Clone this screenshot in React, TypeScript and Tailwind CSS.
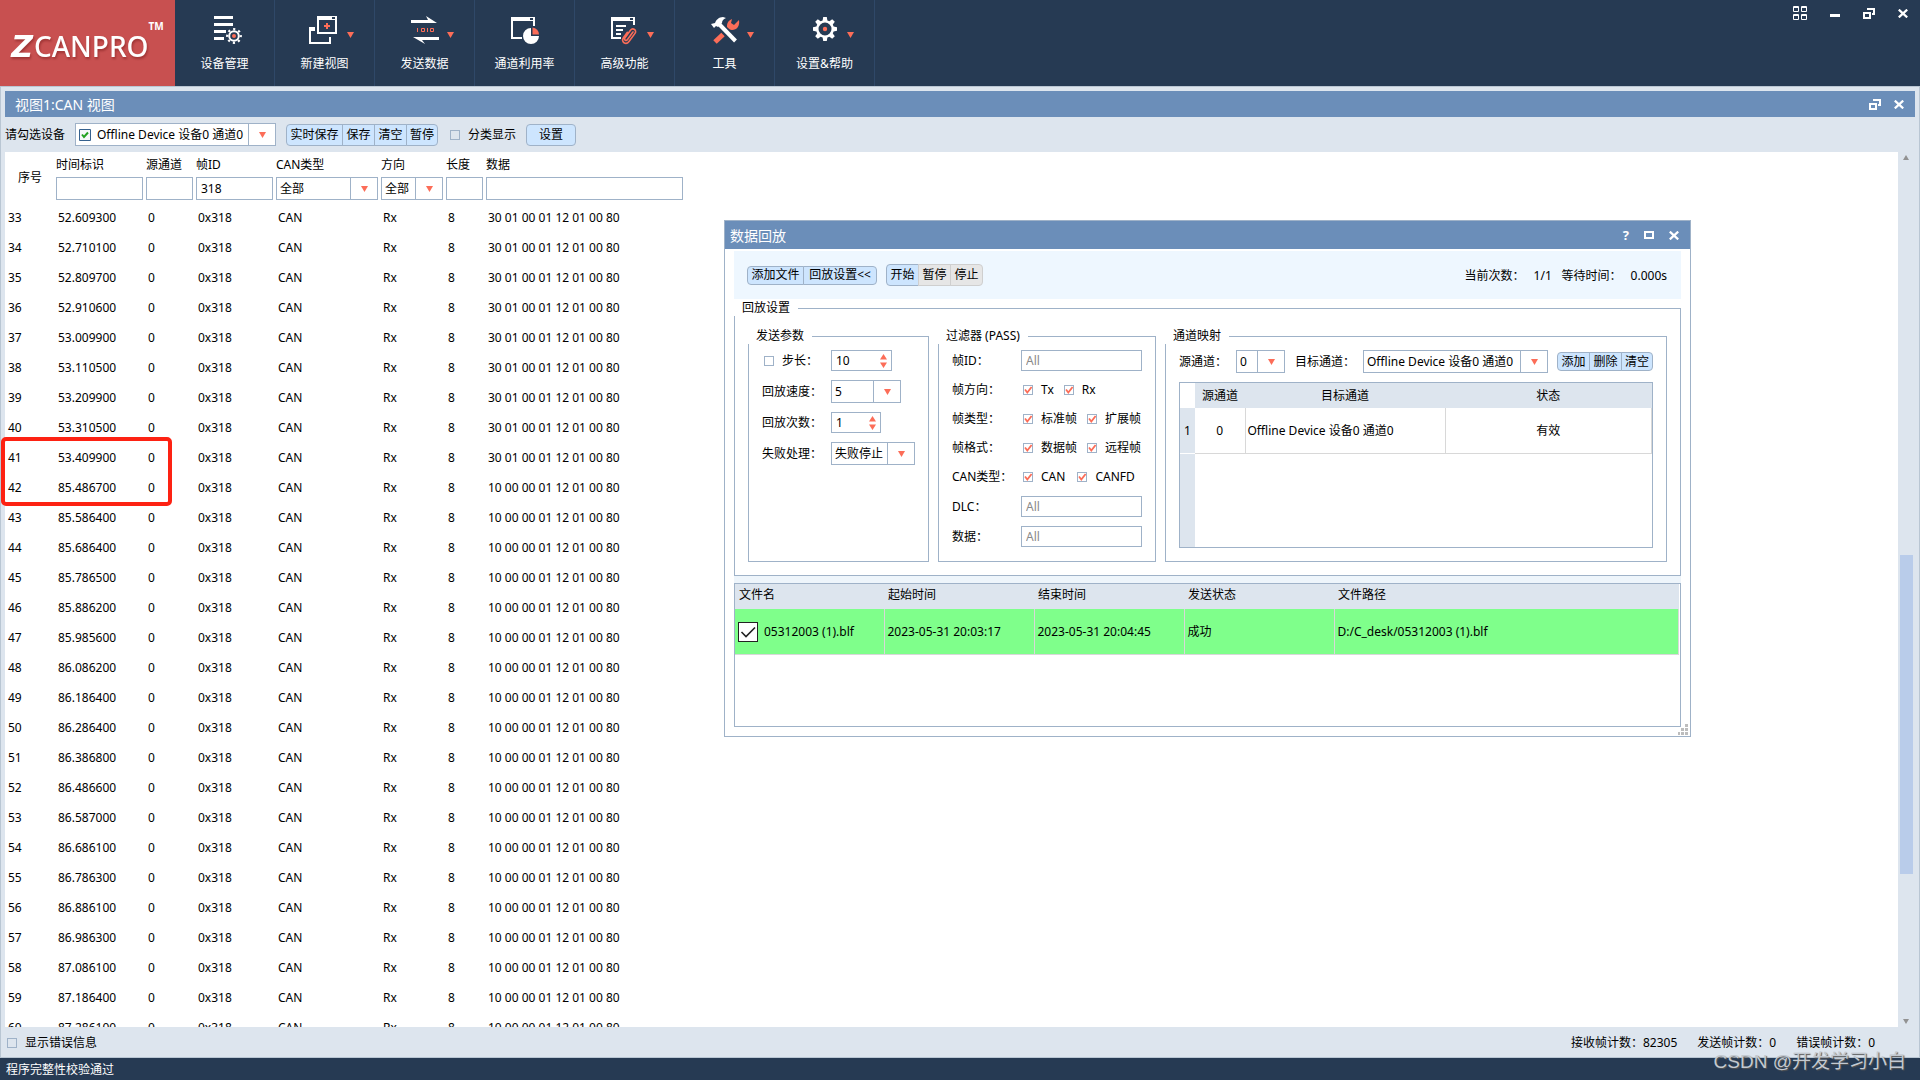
import React from "react";

const FONT = "font-['Noto_Sans','Noto_Sans_CJK_SC',sans-serif]";

const frames: [number, string][] = [
  [33, "52.609300"], [34, "52.710100"], [35, "52.809700"], [36, "52.910600"],
  [37, "53.009900"], [38, "53.110500"], [39, "53.209900"], [40, "53.310500"],
  [41, "53.409900"], [42, "85.486700"], [43, "85.586400"], [44, "85.686400"],
  [45, "85.786500"], [46, "85.886200"], [47, "85.985600"], [48, "86.086200"],
  [49, "86.186400"], [50, "86.286400"], [51, "86.386800"], [52, "86.486600"],
  [53, "86.587000"], [54, "86.686100"], [55, "86.786300"], [56, "86.886100"],
  [57, "86.986300"], [58, "87.086100"], [59, "87.186400"], [60, "87.286100"],
];

function Arrow({ className = "" }: { className?: string }) {
  return (
    <svg viewBox="0 0 7 6" className={`h-1.5 w-[7px] fill-[#fc6d58] ${className}`} aria-hidden="true">
      <path d="M0 0h7L3.5 6z" />
    </svg>
  );
}

function Select({ label, value, className, arrowClass, lead }: {
  label: string; value: string; className: string; arrowClass: string; lead?: React.ReactNode;
}) {
  return (
    <div className={`relative flex h-[23px] items-center border border-[#9fb2c8] bg-white ${className}`}>
      {lead}
      <select aria-label={label} className="h-full w-full appearance-none overflow-hidden bg-transparent pl-[3px] text-xs whitespace-nowrap outline-none">
        <option>{value}</option>
      </select>
      <span className={`pointer-events-none absolute inset-y-0 right-0 flex items-center justify-center border-l border-[#9fb2c8] bg-white ${arrowClass}`}>
        <Arrow />
      </span>
    </div>
  );
}

function Check({ label, checked, className = "" }: { label: string; checked?: boolean; className?: string }) {
  return (
    <label className={`flex items-center gap-2 whitespace-nowrap ${className}`}>
      <span className="grid size-[10px] shrink-0">
        <input type="checkbox" defaultChecked={checked} className="peer size-[10px] appearance-none border border-[#9fb2c8] [grid-area:1/1]" />
        <svg viewBox="0 0 10 10" className="pointer-events-none hidden size-[10px] [grid-area:1/1] peer-checked:block" fill="none" stroke="#fc6d58" strokeWidth="1.8" aria-hidden="true">
          <path d="M2 4.5 4.3 7.5 8.6 2" />
        </svg>
      </span>
      {label}
    </label>
  );
}

function ButtonGroup({ items, className }: { items: { text: string; width: string; disabled?: boolean }[]; className: string }) {
  return (
    <div className={`flex ${className}`}>
      {items.map((b) => (
        <button
          key={b.text}
          disabled={b.disabled}
          className={`-mr-px flex h-full items-center justify-center border border-[#9fb2c8] bg-[#cde5fe] whitespace-nowrap first:rounded-l last:mr-0 last:rounded-r disabled:border-[#cfcfcf] disabled:bg-[#e6e6e6] ${b.width}`}
        >
          {b.text}
        </button>
      ))}
    </div>
  );
}

function Group({ title, className = "", bodyClass, children }: {
  title: string; className?: string; bodyClass: string; children: React.ReactNode;
}) {
  return (
    <fieldset className={`min-w-0 border border-[#9fb2c8] p-0 ${className}`}>
      <legend className="-ml-px h-4 bg-white px-2 leading-4">{title}</legend>
      <div className={bodyClass}>{children}</div>
    </fieldset>
  );
}

function Spin({ label, value, className }: { label: string; value: string; className: string }) {
  return (
    <div className={`flex h-[21px] items-center border border-[#9fb2c8] bg-white ${className}`}>
      <input aria-label={label} defaultValue={value} className="h-full w-full min-w-0 pl-1 outline-none" />
      <svg viewBox="0 0 7 14" className="mr-1 h-3.5 w-[7px] shrink-0 fill-[#fc6d58]" aria-hidden="true">
        <path d="M3.5 0 7 5.5H0zM0 8.5h7L3.5 14z" />
      </svg>
    </div>
  );
}

function CloseIcon() {
  return (
    <svg viewBox="0 0 10 9" className="h-[9px] w-2.5" stroke="#fff" strokeWidth="2.2" aria-hidden="true">
      <path d="M.8.6 9.2 8.4M9.2.6.8 8.4" />
    </svg>
  );
}

function RestoreIcon() {
  return (
    <svg viewBox="0 0 12 11" className="h-[11px] w-3" fill="none" stroke="#fff" strokeWidth="2" aria-hidden="true">
      <path d="M1 5h6v5H1zM4 1h7v5H9M5 2V0" />
    </svg>
  );
}

const GEAR =
  "M12.2 1h3.6l.6 3.4 2 .8 2.8-2 2.6 2.6-2 2.8.8 2 3.4.6v3.6l-3.4.6-.8 2 2 2.8-2.6 2.6-2.8-2-2 .8-.6 3.4h-3.6l-.6-3.4-2-.8-2.8 2-2.6-2.6 2-2.8-.8-2L2 14.8v-3.6l3.4-.6.8-2-2-2.8 2.6-2.6 2.8 2 2-.8z";

const tools: { label: string; arrow: boolean; icon: React.ReactNode }[] = [
  {
    label: "设备管理", arrow: false,
    icon: (
      <g transform="translate(3 0)">
        <path fill="#fff" d="M0 0h19v3H0zM0 7h19v3H0zM0 14h12v3H0zM0 21h10v3H0z" />
        <g transform="translate(20 20)">
          <circle r="4.8" fill="none" stroke="#fff" strokeWidth="2" />
          <circle r="6.8" fill="none" stroke="#fff" strokeWidth="2.2" strokeDasharray="2.2 3.14" strokeDashoffset="1.1" />
          <circle r="2" fill="#fc6d58" />
        </g>
      </g>
    ),
  },
  {
    label: "新建视图", arrow: true,
    icon: (
      <g transform="translate(-2 0)">
        <path fill="#fff" fillRule="evenodd" d="M8 0h20v18H8zM10 4v12h16V4zM23 1v2h3V1z" />
        <path fill="#fff" d="M0 11h6v4H2v11h18v-5h2v7H0z" />
        <path fill="#fc6d58" d="M17 7h2v2h2v2h-2v2h-2v-2h-2V9h2z" />
      </g>
    ),
  },
  {
    label: "发送数据", arrow: true,
    icon: (
      <>
        <path fill="#fff" d="M0 4h17L15 0l11 7H0zM28 24H11l3 4L2 21h26z" />
        <path fill="none" stroke="#fc6d58" d="M6.500 12v4M10.500 12.500h3v3h-3zM16.500 12v4M19.500 12.500h3v3h-3z" />
      </>
    ),
  },
  {
    label: "通道利用率", arrow: false,
    icon: (
      <>
        <path fill="#fff" fillRule="evenodd" d="M0 1h24v9h-2V5H2v16h9v2H0zM19 2v2h3V2z" />
        <path fill="#fff" d="M20 12v8h8a8 8 0 1 1-8-8z" />
        <path fill="#fc6d58" d="M21.500 11.500a7 7 0 0 1 6.500 7h-6.500z" />
      </>
    ),
  },
  {
    label: "高级功能", arrow: true,
    icon: (
      <>
        <path fill="#fff" fillRule="evenodd" d="M0 1h24v8h-2V5H2v16h8v2H0zM19 2v2h3V2z" />
        <path fill="#fff" d="M5 9h10v2H5zM5 13h7v2H5zM5 17h5v2H5z" />
        <path fill="none" stroke="#fc6d58" strokeWidth="1.6" strokeLinecap="round" d="m22 16-5.500 7.500c-1.500 2-4 .3-2.500-1.800l5.500-7.500c2.300-3 6.800 0 4.500 3.200L18 25.500c-3 4-8.500.5-5.600-3.700l4-5.500" />
      </>
    ),
  },
  {
    label: "工具", arrow: true,
    icon: (
      <>
        <path stroke="#fc6d58" strokeWidth="5" d="m4 26 8-7.500" />
        <path fill="#fc6d58" d="M16 11c0-4 1-6 5-8l-1 4 3 2 5-5c1 6-2 10-7 10-2 0-3-1-5-3z" />
        <path stroke="#fff" strokeWidth="4" d="m8 8 16.500 17" />
        <path fill="#fff" d="m0 8 4-1c1-3 4-6 8-6l3 1c-3 1-4 3-4 5l-4 4-2-1-2 2z" />
      </>
    ),
  },
  {
    label: "设置&帮助", arrow: true,
    icon: (
      <>
        <path fill="#fff" fillRule="evenodd" d={`${GEAR}M14 6.500a6.500 6.500 0 1 0 0 13 6.500 6.500 0 0 0 0-13z`} />
        <circle cx="14" cy="13" r="2.200" fill="#fc6d58" />
      </>
    ),
  },
];

function Header() {
  return (
    <header className="flex h-[86px] shrink-0 bg-[#263a53] text-white">
      <div className="flex w-[175px] items-center justify-center bg-[#c85050] pt-1.5 leading-none">
        <div className="flex items-baseline gap-px whitespace-nowrap drop-shadow-[1px_2px_1px_rgba(80,0,0,0.35)]">
          <span className="font-['DejaVu_Sans'] text-[30px] leading-7 font-bold italic">Z</span>
          <span className="font-['Noto_Sans'] text-[28px] leading-7 font-medium">CANPRO</span>
        </div>
        <span className="mb-10 text-[10px] leading-3 font-bold">TM</span>
      </div>
      <nav className="flex">
        {tools.map((t) => (
          <button key={t.label} className="relative flex w-[100px] flex-col items-center border-r border-[#2f4868] pt-4 text-xs">
            <svg viewBox="0 0 28 28" className="size-7 overflow-visible" aria-hidden="true">{t.icon}</svg>
            <span className="mt-[11px] leading-[18px]">{t.label}</span>
            {t.arrow && <Arrow className="absolute top-8 left-[72px]" />}
          </button>
        ))}
      </nav>
      <div className="ml-auto flex h-[26px] items-center gap-[23px] pr-3">
        <button aria-label="布局">
          <svg viewBox="0 0 14 14" className="size-3.5" fill="none" stroke="#fff" aria-hidden="true">
            <path d="M.5.500h5v5h-5zM8.500.500h5v5h-5zM.5 8.500h5v5h-5zM8.500 8.500h5v5h-5zM0 1.500h6M8 1.500h6M0 9.500h6M8 9.500h6" />
          </svg>
        </button>
        <button aria-label="最小化" className="mt-1 h-[3px] w-2.5 bg-white" />
        <button aria-label="还原"><RestoreIcon /></button>
        <button aria-label="关闭"><CloseIcon /></button>
      </div>
    </header>
  );
}

const box = "h-[23px] w-full border border-[#9fb2c8] bg-white pl-[4px] outline-none";

function FrameTable() {
  const th = "pt-1 pr-0.5 pb-0.5 pl-px text-left align-top font-normal";
  const td = "pt-0.5 pl-[3px]";
  return (
    <table className="w-[680px] table-fixed border-collapse whitespace-nowrap">
      <colgroup>
        <col className="w-[50px]" /><col className="w-[90px]" /><col className="w-[50px]" /><col className="w-20" />
        <col className="w-[105px]" /><col className="w-[65px]" /><col className="w-10" /><col />
      </colgroup>
      <thead>
        <tr className="h-[50px]">
          <th className="pt-0.5 text-center font-normal">序号</th>
          <th className={th}><label className="block h-[21px] leading-[18px]" htmlFor="time">时间标识</label><input id="time" className={box} /></th>
          <th className={th}><label className="block h-[21px] leading-[18px]" htmlFor="src">源通道</label><input id="src" className={box} /></th>
          <th className={th}><label className="block h-[21px] leading-[18px]" htmlFor="fid">帧ID</label><input id="fid" defaultValue="318" className={box} /></th>
          <th className={th}><span className="block h-[21px] leading-[18px]">CAN类型</span><Select label="CAN类型" value="全部" className="w-full" arrowClass="w-[27px]" /></th>
          <th className={th}><span className="block h-[21px] leading-[18px]">方向</span><Select label="方向" value="全部" className="w-full" arrowClass="w-[27px]" /></th>
          <th className={th}><label className="block h-[21px] leading-[18px]" htmlFor="len">长度</label><input id="len" className={box} /></th>
          <th className={th}><label className="block h-[21px] leading-[18px]" htmlFor="data">数据</label><input id="data" className={box} /></th>
        </tr>
      </thead>
      <tbody>
        {frames.map(([n, t]) => (
          <tr key={n} className="h-[30px]">
            <td className={td}>{n}</td>
            <td className={td}>{t}</td>
            <td className={td}>0</td>
            <td className={td}>0x318</td>
            <td className={td}>CAN</td>
            <td className={td}>Rx</td>
            <td className={td}>8</td>
            <td className={td}>{n <= 41 ? "30 01 00 01 12 01 00 80" : "10 00 00 01 12 01 00 80"}</td>
          </tr>
        ))}
      </tbody>
    </table>
  );
}

function FilterRow({ label, className, children }: { label: string; className: string; children: React.ReactNode }) {
  return (
    <div className={`flex items-center ${className}`}>
      <span className="w-[69px] shrink-0 whitespace-nowrap">{label}</span>
      {children}
    </div>
  );
}

function ReplayDialog() {
  const all = "h-[21px] w-[121px] border border-[#9fb2c8] pl-1 outline-none placeholder:text-[#8a8a8a]";
  return (
    <section role="dialog" aria-label="数据回放" className="absolute top-[220px] left-[724px] w-[967px] border border-[#9fb2c8] bg-white">
      <div className="flex h-7 items-center bg-[#6b8eb9] pr-[11px] pl-[5px] text-sm text-white">
        <h2 className="pt-0.5">数据回放</h2>
        <div className="ml-auto flex items-center gap-[15px]">
          <button className="text-[13px] font-bold">?</button>
          <button aria-label="最大化" className="h-2 w-2.5 border-2 border-white" />
          <button aria-label="关闭"><CloseIcon /></button>
        </div>
      </div>
      <div className="mx-[9px] mt-0.5 flex h-12 items-center bg-[#eef7ff] pr-3.5 pl-[13px]">
        <ButtonGroup className="h-[19px]" items={[{ text: "添加文件", width: "w-[57px]" }, { text: "回放设置<<", width: "w-[74px]" }]} />
        <ButtonGroup className="ml-[9px] h-[22px]" items={[{ text: "开始", width: "w-[33px]" }, { text: "暂停", width: "w-[33px]", disabled: true }, { text: "停止", width: "w-[33px]", disabled: true }]} />
        <div className="ml-auto flex pt-0.5 whitespace-nowrap">
          <span className="w-[69px]">当前次数：</span>
          <span className="w-7">1/1</span>
          <span className="w-[69px]">等待时间：</span>
          <span>0.000s</span>
        </div>
      </div>
      <div className="mx-[9px] pt-px">
        <Group title="回放设置" bodyClass="px-[13px] pt-3 pb-[13px]">
          <div className="flex gap-[9px]">
            <Group title="发送参数" className="w-[181px]" bodyClass="pt-1.5 pl-[13px]">
              <div className="grid grid-cols-[69px_auto] items-center">
                <Check label="步长：" className="h-[21px] pl-0.5" />
                <Spin label="步长" value="10" className="w-[61px]" />
                <span className="mt-[9px]">回放速度：</span>
                <Select label="回放速度" value="5" className="mt-[9px] w-[70px]" arrowClass="w-[27px]" />
                <span className="mt-[9px]">回放次数：</span>
                <Spin label="回放次数" value="1" className="mt-[9px] w-[50px]" />
                <span className="mt-[9px]">失败处理：</span>
                <Select label="失败处理" value="失败停止" className="mt-[9px] w-[84px]" arrowClass="w-[27px]" />
              </div>
            </Group>
            <Group title="过滤器 (PASS)" className="w-[218px]" bodyClass="pt-1.5 pl-[13px]">
              <FilterRow label="帧ID：" className="h-[21px]"><input aria-label="帧ID" placeholder="All" className={all} /></FilterRow>
              <FilterRow label="帧方向：" className="mt-1 h-[29px] gap-0.5"><Check label="Tx" checked /><Check label="Rx" checked className="ml-2" /></FilterRow>
              <FilterRow label="帧类型：" className="h-[29px] gap-0.5"><Check label="标准帧" checked /><Check label="扩展帧" checked className="ml-2" /></FilterRow>
              <FilterRow label="帧格式：" className="h-[29px] gap-0.5"><Check label="数据帧" checked /><Check label="远程帧" checked className="ml-2" /></FilterRow>
              <FilterRow label="CAN类型：" className="h-[29px] gap-0.5"><Check label="CAN" checked /><Check label="CANFD" checked className="ml-2.5" /></FilterRow>
              <FilterRow label="DLC：" className="mt-[5px] h-[21px]"><input aria-label="DLC" placeholder="All" className={all} /></FilterRow>
              <FilterRow label="数据：" className="mt-[9px] h-[21px]"><input aria-label="数据" placeholder="All" className={all} /></FilterRow>
            </Group>
            <Group title="通道映射" className="flex-1" bodyClass="px-[13px] pt-1.5 pb-[13px]">
              <div className="flex items-center whitespace-nowrap">
                <span className="w-[57px]">源通道：</span>
                <Select label="源通道" value="0" className="w-[49px]" arrowClass="w-[27px]" />
                <span className="ml-2.5 w-[68px]">目标通道：</span>
                <Select label="目标通道" value="Offline Device 设备0 通道0" className="w-[185px]" arrowClass="w-[27px]" />
                <ButtonGroup className="ml-auto h-[19px]" items={[{ text: "添加", width: "w-[33px]" }, { text: "删除", width: "w-[33px]" }, { text: "清空", width: "w-[32px]" }]} />
              </div>
              <div className="mt-[9px] flex h-[166px] flex-col border border-[#9fb2c8]">
                <table className="w-full table-fixed border-collapse">
                  <colgroup><col className="w-[15px]" /><col className="w-[50px]" /><col className="w-[200px]" /><col /></colgroup>
                  <thead>
                    <tr className="h-[25px]">
                      <td />
                      <th className="bg-[#dde5ee] font-normal whitespace-nowrap">源通道</th>
                      <th className="bg-[#dde5ee] font-normal">目标通道</th>
                      <th className="bg-[#dde5ee] font-normal">状态</th>
                    </tr>
                  </thead>
                  <tbody>
                    <tr className="h-[45px] text-center">
                      <th className="bg-[#dde5ee] font-normal">1</th>
                      <td className="border-r border-b border-[#d8d8d8] pt-0.5">0</td>
                      <td className="border-r border-b border-[#d8d8d8] pt-0.5 pl-0.5 text-left">Offline Device 设备0 通道0</td>
                      <td className="border-r border-b border-[#d8d8d8] pt-0.5">有效</td>
                    </tr>
                  </tbody>
                </table>
                <div className="w-[15px] flex-1 bg-[#dde5ee]" />
              </div>
            </Group>
          </div>
        </Group>
        <div className="h-[7px] bg-[#eef5fb]" />
        <div className="mb-[9px] h-[144px] border border-[#9fb2c8] pr-px">
          <table className="w-full table-fixed border-collapse text-left whitespace-nowrap">
            <colgroup><col className="w-[149px]" /><col className="w-[150px]" /><col className="w-[150px]" /><col className="w-[150px]" /><col /></colgroup>
            <thead>
              <tr className="h-[25px] bg-[#dde5ee]">
                {["文件名", "起始时间", "结束时间", "发送状态", "文件路径"].map((h) => (
                  <th key={h} className="pb-1 pl-1 font-normal">{h}</th>
                ))}
              </tr>
            </thead>
            <tbody>
              <tr className="h-[45px] bg-[#7fff8b] [&>td]:border-r [&>td]:border-b [&>td]:border-[#d8d8d8] [&>td]:pt-0.5 [&>td]:pl-[3px]">
                <td>
                  <label className="flex items-center gap-1.5">
                    <span className="grid size-5">
                      <input type="checkbox" defaultChecked className="peer size-5 appearance-none border border-[#222] bg-white [grid-area:1/1]" />
                      <svg viewBox="0 0 20 20" className="pointer-events-none hidden size-5 [grid-area:1/1] peer-checked:block" fill="none" stroke="#222" strokeWidth="1.6" aria-hidden="true"><path d="m3.500 10 4.500 4.500L17 5.500" /></svg>
                    </span>
                    05312003 (1).blf
                  </label>
                </td>
                <td>2023-05-31 20:03:17</td>
                <td>2023-05-31 20:04:45</td>
                <td>成功</td>
                <td>D:/C_desk/05312003 (1).blf</td>
              </tr>
            </tbody>
          </table>
        </div>
      </div>
      <svg viewBox="0 0 10 11" className="absolute right-0.5 bottom-px h-[11px] w-2.5 fill-[#bdbdbd]" aria-hidden="true">
        <path d="M7 0h3v3H7zM3 4h3v3H3zM7 4h3v3H7zM0 8h2v3H0zM3 8h3v3H3zM7 8h3v3H7z" />
      </svg>
    </section>
  );
}

export default function App() {
  return (
    <div className={`relative flex h-screen flex-col overflow-hidden bg-[#dde5ee] text-xs leading-[18px] text-black ${FONT}`}>
      <Header />
      <main className="flex min-h-0 flex-1 flex-col border border-[#b9c6d3] px-1 pt-1">
        <div className="flex h-[26px] shrink-0 items-center bg-[#6b8eb9] pr-[11px] pl-2.5 text-sm text-white">
          <h1 className="pt-0.5">视图1:CAN 视图</h1>
          <div className="ml-auto flex gap-[13px]">
            <button aria-label="还原"><RestoreIcon /></button>
            <button aria-label="关闭"><CloseIcon /></button>
          </div>
        </div>
        <div className="flex h-[35px] shrink-0 items-center whitespace-nowrap">
          <span className="w-[70px]">请勾选设备</span>
          <Select
            label="请勾选设备"
            value="Offline Device 设备0 通道0"
            className="w-[201px]"
            arrowClass="w-[27px]"
            lead={
              <svg viewBox="0 0 12 12" className="mr-[3px] ml-[3px] size-3 shrink-0" fill="none" aria-hidden="true">
                <path stroke="#35618e" fill="#f4f7fa" d="M.5.500h11v11H.5z" />
                <path stroke="#21a121" strokeWidth="2" d="M3 5.500 5 8l4-4.500" />
              </svg>
            }
          />
          <ButtonGroup className="ml-2.5 h-[22px]" items={[{ text: "实时保存", width: "w-[57px]" }, { text: "保存", width: "w-[33px]" }, { text: "清空", width: "w-[33px]" }, { text: "暂停", width: "w-[32px]" }]} />
          <Check label="分类显示" className="ml-3" />
          <button className="ml-2.5 h-[22px] w-[50px] rounded border border-[#9fb2c8] bg-[#cde5fe]">设置</button>
        </div>
        <div className="flex min-h-0 flex-1">
          <div className="min-w-0 flex-1 overflow-hidden bg-white">
            <FrameTable />
          </div>
          <div className="flex w-[17px] flex-col items-center py-[3px] pr-px" aria-hidden="true">
            <svg viewBox="0 0 6 5" className="h-[5px] w-1.5 fill-[#929292]"><path d="M0 5h6L3 0z" /></svg>
            <div className="flex w-[13px] flex-1 flex-col">
              <div className="grow-[394]" />
              <div className="grow-[318] bg-[#b9ccea]" />
              <div className="grow-[145]" />
            </div>
            <svg viewBox="0 0 6 5" className="h-[5px] w-1.5 fill-[#929292]"><path d="M0 0h6L3 5z" /></svg>
          </div>
        </div>
        <div className="flex h-[30px] shrink-0 items-center pt-0.5 pr-10 pl-0.5">
          <Check label="显示错误信息" />
          <div className="ml-auto flex gap-5">
            <span>接收帧计数：82305</span>
            <span>发送帧计数：0</span>
            <span>错误帧计数：0</span>
          </div>
        </div>
      </main>
      <footer className="flex h-[22px] shrink-0 items-center bg-[#263a53] pt-0.5 pl-1.5 text-white">程序完整性校验通过</footer>
      <div className="pointer-events-none absolute top-[437px] left-px h-[69px] w-[171px] rounded-[5px] border-4 border-[#fd2213]" />
      <ReplayDialog />
      <div className="pointer-events-none absolute right-3.5 bottom-1 font-['Liberation_Sans','Noto_Sans_CJK_SC',sans-serif] text-[19px] leading-7 text-[#c3c9d0] [text-shadow:1px_1px_1px_#555]">
        CSDN @开发学习小白
      </div>
    </div>
  );
}
